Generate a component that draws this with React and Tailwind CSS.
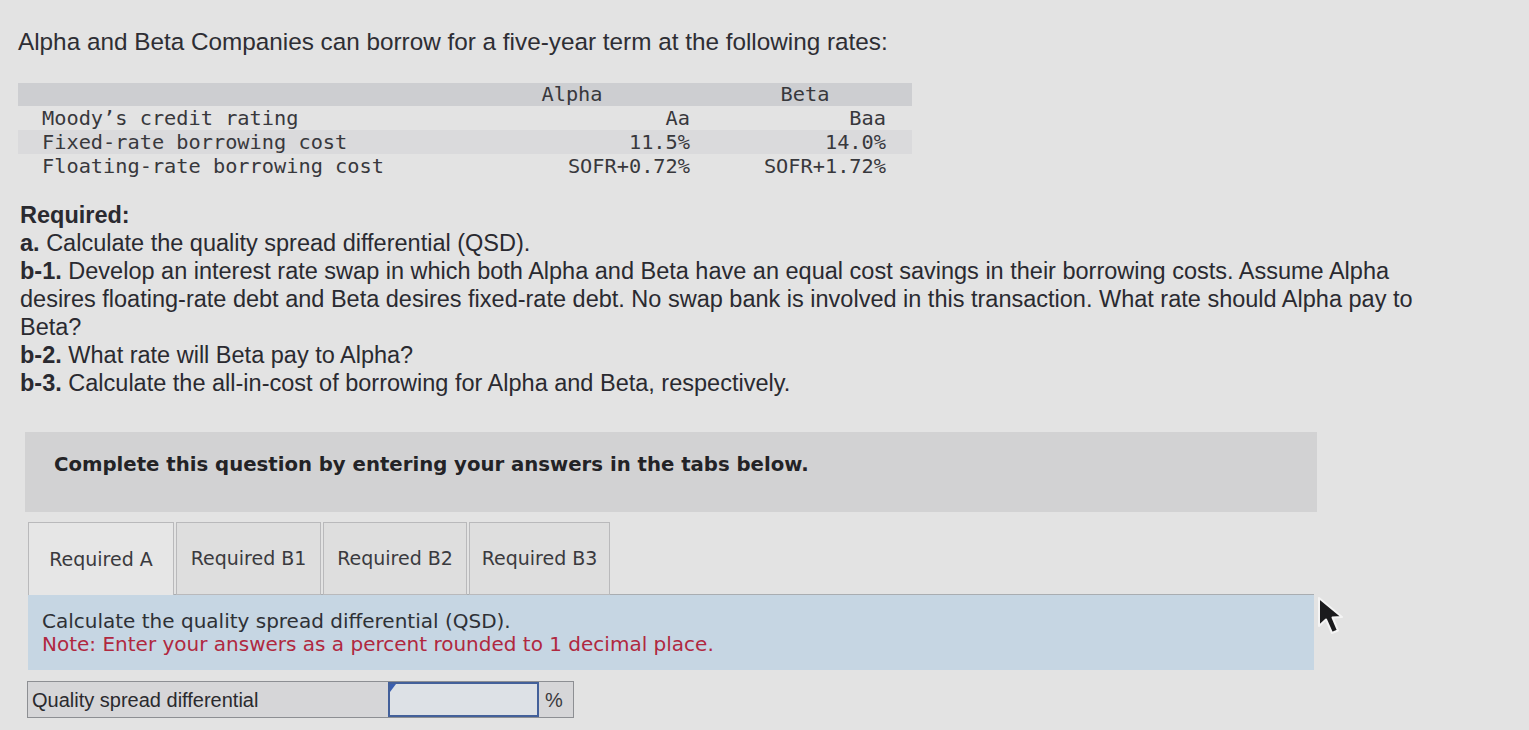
import React from "react";

const rows = [
  { label: "Moody’s credit rating", alpha: "Aa", beta: "Baa", shade: false },
  { label: "Fixed-rate borrowing cost", alpha: "11.5%", beta: "14.0%", shade: true },
  { label: "Floating-rate borrowing cost", alpha: "SOFR+0.72%", beta: "SOFR+1.72%", shade: false },
];

const tabs = [
  { name: "Required A", w: "w-[146px]" },
  { name: "Required B1", w: "w-[145px]" },
  { name: "Required B2", w: "w-[144px]" },
  { name: "Required B3", w: "w-[141px]" },
];

export default function App() {
  return (
    <div className="w-[1529px] h-[730px] overflow-hidden bg-[#e3e3e3] text-[#2e2e34] relative">
      <div className="pl-[18px] pt-[28px]">
        {/* Intro */}
        <p className="font-['Liberation_Sans',sans-serif] text-[24.3px] leading-[28px]">
          Alpha and Beta Companies can borrow for a five-year term at the following rates:
        </p>

        {/* Rates table */}
        <table className="mt-[27px] w-[894px] font-['DejaVu_Sans_Mono',monospace] text-[20.3px] leading-[24px] text-[#38383c]">
          <thead>
            <tr className="bg-[#cdced1] h-[23px]">
              <th className="w-[428px]"></th>
              <th className="w-[252px] font-normal text-center align-bottom leading-[23px]">Alpha</th>
              <th className="w-[214px] font-normal text-center align-bottom leading-[23px]">Beta</th>
            </tr>
          </thead>
          <tbody>
            {rows.map((r) => (
              <tr key={r.label} className={r.shade ? "bg-[#dadadc]" : ""}>
                <td className="pl-[24px] whitespace-pre">{r.label}</td>
                <td className="text-right pr-[8px]">{r.alpha}</td>
                <td className="text-right pr-[26px]">{r.beta}</td>
              </tr>
            ))}
          </tbody>
        </table>

        {/* Required list */}
        <div className="mt-[23px] pl-[2px] w-[1432px] font-['Liberation_Sans',sans-serif] text-[23.5px] leading-[28px] text-[#2a2a30]">
          <p className="font-bold">Required:</p>
          <p>
            <span className="font-bold">a.</span> Calculate the quality spread differential (QSD).
          </p>
          <p>
            <span className="font-bold">b-1.</span> Develop an interest rate swap in which both Alpha and Beta have an equal cost savings in their borrowing costs. Assume Alpha desires floating-rate debt and Beta desires fixed-rate debt. No swap bank is involved in this transaction. What rate should Alpha pay to Beta?
          </p>
          <p>
            <span className="font-bold">b-2.</span> What rate will Beta pay to Alpha?
          </p>
          <p>
            <span className="font-bold">b-3.</span> Calculate the all-in-cost of borrowing for Alpha and Beta, respectively.
          </p>
        </div>
      </div>

      {/* Question box */}
      <div className="ml-[25px] mt-[35px] w-[1292px] h-[80px] bg-[#d2d2d3] pl-[29px] pt-[21px]">
        <p className="font-['DejaVu_Sans',sans-serif] font-bold text-[19.7px] leading-[24px] text-[#232326]">
          Complete this question by entering your answers in the tabs below.
        </p>
      </div>

      {/* Tabs */}
      <div className="ml-[28px] mt-[10px] flex gap-[2px] font-['DejaVu_Sans',sans-serif] text-[19px] text-[#3a3a3e]">
        {tabs.map((t, i) => (
          <div
            key={t.name}
            className={`${t.w} h-[73px] flex items-center justify-center border border-[#b9b9bb] ${
              i === 0 ? "bg-[#e6e6e6] border-b-0 relative z-10" : "bg-[#dedede]"
            }`}
          >
            {t.name}
          </div>
        ))}
      </div>

      {/* Instruction panel */}
      <div className="ml-[28px] -mt-px w-[1286px] h-[76px] bg-[#c6d6e3] border-t border-[#a9adb1] pl-[14px] pt-[15px] font-['DejaVu_Sans',sans-serif] text-[20px] leading-[23px]">
        <p className="text-[#2e3136]">Calculate the quality spread differential (QSD).</p>
        <p className="text-[#b0283f]">Note: Enter your answers as a percent rounded to 1 decimal place.</p>
      </div>

      {/* Answer row */}
      <div className="ml-[27px] mt-[11px] flex h-[37px] w-[547px] border border-[#8d8f93] bg-[#d6d6d8] font-['Liberation_Sans',sans-serif] text-[20px]">
        <div className="w-[360px] flex items-center pl-[4px] text-[#2a2a2e]">Quality spread differential</div>
        <div className="relative w-[151px] border-2 border-[#43609a] bg-[#dde1e6]">
          <span className="absolute left-0 top-0 w-0 h-0 border-t-[8px] border-r-[6px] border-t-[#3a5fb0] border-r-transparent" />
        </div>
        <div className="flex-1 flex items-center pl-[6px] text-[#3a3a3e]">%</div>
      </div>

      {/* Mouse cursor */}
      <svg className="absolute left-[1317px] top-[596px]" width="32" height="46" viewBox="0 0 32 46">
        <path
          d="M2 2 L2 30 L9 23.5 L15 37 L21 34.5 L15.5 21.5 L25 21 Z"
          fill="#1b1b1d"
          stroke="#f4f4f4"
          strokeWidth="2"
          strokeLinejoin="round"
        />
      </svg>
    </div>
  );
}
